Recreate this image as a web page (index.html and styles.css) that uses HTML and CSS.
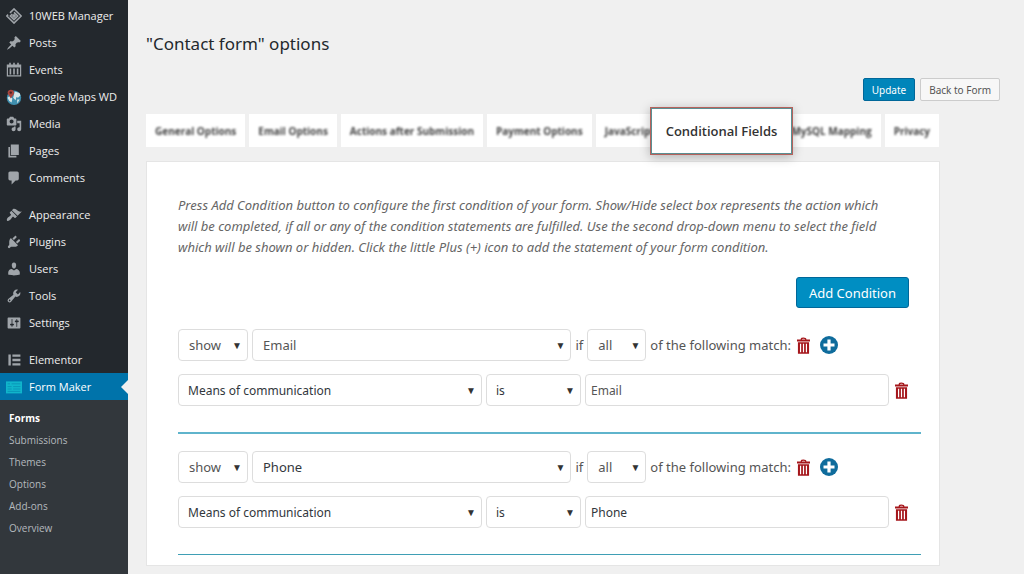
FILE: index.html
```html
<!DOCTYPE html>
<html lang="en">
<head>
<meta charset="utf-8">
<title>"Contact form" options</title>
<link rel="stylesheet" href="styles.css">
</head>
<body>
<svg class="sprite" aria-hidden="true">
  <symbol id="trash" viewBox="0 0 14 18"><path fill="none" stroke="currentColor" stroke-width="1.4" d="M4.6 3V2.4Q4.6 1 7 1T9.400 2.400V3"/><path fill="currentColor" fill-rule="evenodd" d="M0 2.600h14v2H0zM1 5.500h12V18H1zM3.200 7.200v9h1.300v-9zM6.350 7.200v9h1.300v-9zM9.500 7.200v9h1.300v-9z"/></symbol>
  <symbol id="plus" viewBox="0 0 18 18"><circle cx="9" cy="9" r="9" fill="currentColor"/><path fill="#fff" d="M7.400 3.500h3.200v3.900h3.900v3.200h-3.900v3.900H7.400v-3.900H3.500V7.400h3.900z"/></symbol>
</svg>
<div class="admin">
  <nav class="sidebar" aria-label="Admin menu">
    <ul class="menu">
      <li><a href="#"><svg viewBox="0 0 20 20" fill="none" stroke="currentColor" stroke-width="2"><path d="M5 6l5-4.800 9 8.800-9 8.800L1 10l1.700-1.700"/><path d="M10 5.500l4.600 4.500-4.600 4.500L5.400 10 8 7.500"/><path d="M10 8.500l1.500 1.500-1.500 1.500L8.500 10z"/></svg>10WEB Manager</a></li>
      <li><a href="#"><svg viewBox="0 0 20 20" fill="currentColor"><path d="M10.440 3.020l1.820-1.820 6.360 6.350-1.830 1.820c-1.050-.68-2.480-.57-3.410.36l-.75.75c-.92.93-1.040 2.350-.35 3.410l-1.830 1.820-2.410-2.410-2.800 2.790c-.42.42-3.380 2.710-3.800 2.290s1.860-3.390 2.280-3.810l2.790-2.790L4.100 9.360l1.830-1.820c1.050.69 2.480.57 3.400-.36l.75-.75c.93-.92 1.050-2.350.36-3.410z"/></svg>Posts</a></li>
      <li><a href="#"><svg viewBox="0 0 20 20" fill="currentColor"><path fill-rule="evenodd" d="M1 3h3V1h2v2h3V1h2v2h3V1h2v2h3v15H1zM2.500 7v9.500h15V7z"/><path d="M4.500 8h2v7.500h-2zM9 8h2v7.500H9zM13.500 8h2v7.500h-2z"/></svg>Events</a></li>
      <li><a href="#"><svg viewBox="0 0 20 20"><circle cx="10" cy="11" r="9" fill="#3f8fae"/><path fill="#d9e6e6" d="M11 3l6 2 1 3-3 3-2-1-1 4-3-3 1-4zM4 9l4 3-1 5-3-2-2-4zM14 13l3 0-3 5z"/><path fill="#a9453d" d="M6 1c3 0 4.500 2 4 4.500C9.500 8 7 9.500 6 12 4.500 9 2 7 2 4.500 2 2.500 4 1 6 1z"/><circle cx="6" cy="4.500" r="1.500" fill="#4d2424"/></svg>Google Maps WD</a></li>
      <li><a href="#"><svg viewBox="0 0 20 20" fill="currentColor"><path d="M13 11V4c0-.55-.45-1-1-1h-1.670L9 1H5L3.670 3H2c-.55 0-1 .45-1 1v7c0 .55.45 1 1 1h10c.55 0 1-.45 1-1zM7 4.500c1.380 0 2.500 1.120 2.500 2.500S8.380 9.500 7 9.500 4.500 8.380 4.500 7 5.620 4.500 7 4.500zM14 6h5v10.500c0 1.380-1.120 2.500-2.500 2.500S14 17.880 14 16.500s1.120-2.500 2.500-2.500c.17 0 .34.020.5.050V9h-3V6zm-4 8.050V13h2v3.500c0 1.380-1.120 2.500-2.500 2.500S7 17.880 7 16.500 8.120 14 9.500 14c.17 0 .34.020.5.050z"/></svg>Media</a></li>
      <li><a href="#"><svg viewBox="0 0 20 20" fill="currentColor"><path d="M6 15V2h10v13H6zm-1 1h8v2H3V5h2v11z"/></svg>Pages</a></li>
      <li><a href="#"><svg viewBox="0 0 20 20" fill="currentColor"><path d="M5 2h9c1.100 0 2 .9 2 2v7c0 1.100-.9 2-2 2h-2l-5 5v-5H5c-1.100 0-2-.9-2-2V4c0-1.100.9-2 2-2z"/></svg>Comments</a></li>
    </ul>
    <ul class="menu">
      <li><a href="#"><svg viewBox="0 0 20 20" fill="currentColor"><path d="M14.480 11.060L7.410 3.990l1.500-1.500c.5-.56 2.300-.47 3.510.32 1.210.8 1.430 1.280 2.910 2.100 1.180.64 2.450 1.260 4.450.85zm-.71.71L6.700 4.700 4.930 6.470c-.39.39-.39 1.020 0 1.410l1.060 1.060c.39.39.39 1.030 0 1.420-.6.6-1.430 1.110-2.210 1.690-.35.26-.7.53-1.010.84C1.430 14.230.4 16.080 1.400 17.070c.99 1 2.840-.03 4.180-1.360.31-.31.58-.66.85-1.020.57-.78 1.080-1.610 1.690-2.210.39-.39 1.020-.39 1.410 0l1.060 1.060c.39.39 1.020.39 1.410 0z"/></svg>Appearance</a></li>
      <li><a href="#"><svg viewBox="0 0 20 20" fill="currentColor"><path d="M13.110 4.360L9.870 7.600 8 5.730l3.240-3.240c.35-.34 1.050-.2 1.560.32.52.51.66 1.210.31 1.550zm-8 1.770l.91-1.120 9.010 9.010-1.190.84c-.71.71-2.630 1.160-3.820 1.160H6.140L4.900 17.260c-.59.59-1.540.59-2.120 0-.59-.58-.59-1.530 0-2.120l1.240-1.240v-3.880c0-1.130.4-3.190 1.090-3.890zm7.260 3.970l3.240-3.240c.34-.35 1.040-.21 1.550.31.52.51.66 1.210.31 1.550l-3.240 3.250z"/></svg>Plugins</a></li>
      <li><a href="#"><svg viewBox="0 0 20 20" fill="currentColor"><path d="M10 9.250c-2.270 0-2.730-3.440-2.730-3.440C7 4.020 7.820 2 9.970 2c2.160 0 2.980 2.020 2.710 3.810 0 0-.41 3.440-2.680 3.440zm0 2.570L12.720 10c2.390 0 4.520 2.330 4.520 4.530v2.490s-3.650 1.130-7.240 1.130c-3.650 0-7.240-1.130-7.240-1.130v-2.490c0-2.250 1.940-4.480 4.470-4.480z"/></svg>Users</a></li>
      <li><a href="#"><svg viewBox="0 0 20 20" fill="currentColor"><path d="M16.680 9.770c-1.340 1.340-3.300 1.670-4.950.99l-5.410 6.520c-.99.99-2.590.99-3.580 0s-.99-2.590 0-3.570l6.520-5.420c-.68-1.650-.35-3.610.99-4.950 1.280-1.280 3.120-1.620 4.720-1.060l-2.890 2.890 2.820 2.820 2.860-2.870c.53 1.580.18 3.390-1.080 4.650zM3.810 16.210c.4.39 1.040.39 1.430 0 .4-.4.4-1.040 0-1.430-.39-.4-1.030-.4-1.430 0-.39.39-.39 1.030 0 1.430z"/></svg>Tools</a></li>
      <li><a href="#"><svg viewBox="0 0 20 20" fill="currentColor"><path d="M18 16V4c0-.55-.45-1-1-1H3c-.55 0-1 .45-1 1v12c0 .55.45 1 1 1h14c.55 0 1-.45 1-1zM8 11h1c.55 0 1 .45 1 1s-.45 1-1 1H8v1.500c0 .28-.22.5-.5.5s-.5-.22-.5-.5V13H6c-.55 0-1-.45-1-1s.45-1 1-1h1V5.500c0-.28.22-.5.5-.5s.5.22.5.5V11zm5-2h-1c-.55 0-1-.45-1-1s.45-1 1-1h1V5.500c0-.28.22-.5.5-.5s.5.22.5.5V7h1c.55 0 1 .45 1 1s-.45 1-1 1h-1v5.500c0 .28-.22.5-.5.5s-.5-.22-.5-.5V9z"/></svg>Settings</a></li>
    </ul>
    <ul class="menu">
      <li><a href="#"><svg viewBox="0 0 20 20" fill="currentColor"><path d="M3 3h3v14H3zM8 3h10v3H8zM8 8.500h10v3H8zM8 14h10v3H8z"/></svg>Elementor</a></li>
      <li><a class="current" href="#" aria-current="true"><svg viewBox="0 0 20 20"><path fill="#10b5cb" d="M0 3h20v15H0z"/><path fill="none" stroke="#078fb4" d="M2 6h3M7 6h11M2 9.500h5M9 9.500h9M2 12.500h5M9 12.500h9M2 15.500h16"/></svg>Form Maker</a>
        <ul class="submenu">
          <li><a class="selected" href="#">Forms</a></li>
          <li><a href="#">Submissions</a></li>
          <li><a href="#">Themes</a></li>
          <li><a href="#">Options</a></li>
          <li><a href="#">Add-ons</a></li>
          <li><a href="#">Overview</a></li>
        </ul>
      </li>
    </ul>
  </nav>
  <main class="content">
    <h1>"Contact form" options</h1>
    <div class="actions">
      <button class="button primary" type="button">Update</button>
      <button class="button" type="button">Back to Form</button>
    </div>
    <div class="tabs" role="tablist">
      <button class="tab" type="button" role="tab"><span>General Options</span></button>
      <button class="tab" type="button" role="tab"><span>Email Options</span></button>
      <button class="tab" type="button" role="tab"><span>Actions after Submission</span></button>
      <button class="tab" type="button" role="tab"><span>Payment Options</span></button>
      <button class="tab" type="button" role="tab"><span>JavaScript</span></button>
      <button class="tab active" type="button" role="tab" aria-selected="true">Conditional Fields</button>
      <button class="tab" type="button" role="tab"><span>MySQL Mapping</span></button>
      <button class="tab" type="button" role="tab"><span>Privacy</span></button>
    </div>
    <section class="panel">
      <p class="intro">Press Add Condition button to configure the first condition of your form. Show/Hide select box represents the action which will be completed, if all or any of the condition statements are fulfilled. Use the second drop-down menu to select the field which will be shown or hidden. Click the little Plus (+) icon to add the statement of your form condition.</p>
      <div class="add"><button class="button primary large" type="button">Add Condition</button></div>
      <div class="condition">
        <div class="rule">
          <span class="select"><select aria-label="Action"><option>show</option><option>hide</option></select><i>▼</i></span>
          <span class="select wide"><select aria-label="Field"><option>Email</option><option>Phone</option></select><i>▼</i></span>
          <span>if</span>
          <span class="select"><select aria-label="Match"><option>all</option><option>any</option></select><i>▼</i></span>
          <span class="match">of the following match:</span>
          <button class="icon trash" type="button" aria-label="Delete condition"><svg><use href="#trash"/></svg></button>
          <button class="icon plus" type="button" aria-label="Add statement"><svg><use href="#plus"/></svg></button>
        </div>
        <div class="statement">
          <span class="select"><select aria-label="Statement field"><option>Means of communication</option></select><i>▼</i></span>
          <span class="select"><select aria-label="Operator"><option>is</option><option>is not</option></select><i>▼</i></span>
          <input type="text" value="Email" aria-label="Value">
          <button class="icon trash" type="button" aria-label="Delete statement"><svg><use href="#trash"/></svg></button>
        </div>
      </div>
      <div class="condition">
        <div class="rule">
          <span class="select"><select aria-label="Action"><option>show</option><option>hide</option></select><i>▼</i></span>
          <span class="select wide dark"><select aria-label="Field"><option>Phone</option><option>Email</option></select><i>▼</i></span>
          <span>if</span>
          <span class="select"><select aria-label="Match"><option>all</option><option>any</option></select><i>▼</i></span>
          <span class="match">of the following match:</span>
          <button class="icon trash" type="button" aria-label="Delete condition"><svg><use href="#trash"/></svg></button>
          <button class="icon plus" type="button" aria-label="Add statement"><svg><use href="#plus"/></svg></button>
        </div>
        <div class="statement">
          <span class="select"><select aria-label="Statement field"><option>Means of communication</option></select><i>▼</i></span>
          <span class="select"><select aria-label="Operator"><option>is</option><option>is not</option></select><i>▼</i></span>
          <input class="dark" type="text" value="Phone" aria-label="Value">
          <button class="icon trash" type="button" aria-label="Delete statement"><svg><use href="#trash"/></svg></button>
        </div>
      </div>
    </section>
  </main>
</div>
</body>
</html>
```
FILE: styles.css
```css
* { box-sizing: border-box; }
body {
  margin: 0;
  background: #f0f0f0;
  color: #555;
  font-family: "Open Sans", "Noto Sans", sans-serif;
  font-size: 13px;
}
ul { margin: 0; padding: 0; list-style: none; }
button, select, input { font: inherit; color: inherit; }
.sprite { display: none; }

.admin { display: flex; min-height: 100vh; }

.sidebar {
  flex: 0 0 128px;
  display: flex;
  flex-direction: column;
  gap: 10px;
  padding-top: 2px;
  background: #23282d;
}
.menu > li > a {
  display: flex;
  align-items: center;
  gap: 7px;
  height: 27px;
  padding-left: 6px;
  color: #eee;
  font-size: 11px;
  text-decoration: none;
  white-space: nowrap;
}
.menu svg { width: 16px; height: 16px; color: #a0a5aa; }
.menu:last-child { flex: 1; display: flex; flex-direction: column; }
.menu:last-child > li:last-child { flex: 1; display: flex; flex-direction: column; }
.menu > li > a.current { background: #0073aa; color: #fff; }
.current::after {
  content: "";
  margin-left: auto;
  border: 7px solid transparent;
  border-left: 0;
  border-right-color: #f0f0f0;
}
.submenu { flex: 1; padding: 7px 0 0 9px; background: #32373c; }
.submenu a {
  display: block;
  color: #b4b9be;
  font-size: 10px;
  line-height: 22px;
  text-decoration: none;
}
.submenu .selected { color: #fff; font-weight: 700; }

.content { flex: 1; min-width: 0; padding: 32px 24px 8px 18px; }
h1 {
  margin: 0;
  color: #23282d;
  font-family: "Noto Sans", sans-serif;
  font-size: 17px;
  font-weight: 400;
  line-height: 24px;
}
.actions { display: flex; justify-content: flex-end; gap: 5px; margin-top: 22px; }
.button {
  height: 23px;
  padding: 0 8px;
  border: 1px solid #ccc;
  border-radius: 2px;
  background: #f7f7f7;
  font-family: "Noto Sans", sans-serif;
  font-size: 10px;
  line-height: 20px;
  white-space: nowrap;
}
.primary { border-color: #006799; background: #0085ba; color: #fff; }
.large {
  height: 31px;
  padding: 0 12px;
  background: #008ec2;
  border-radius: 3px;
  font-size: 13px;
}

.tabs { display: flex; align-items: center; gap: 4px; height: 33px; margin-top: 13px; }
.tab {
  height: 33px;
  padding: 0 9px;
  border: 0;
  background: #fff;
  color: #444;
  font-size: 10px;
  font-weight: 700;
  white-space: nowrap;
}
.tab span { display: block; filter: blur(1px); }
.active {
  z-index: 1;
  height: 48px;
  margin: 0 -15px 0 -18px;
  padding: 0 15px;
  border: 1px solid #b5625c;
  box-shadow: inset 0 0 0 1px #5a8f93, 0 2px 10px #0004;
  color: #333;
  font-size: 13px;
  font-weight: 600;
}

.panel {
  margin: 14px 60px 0 0;
  padding: 33px 18px 10px 31px;
  border: 1px solid #e5e5e5;
  background: #fff;
  font-family: "Noto Sans", sans-serif;
}
.intro { margin: 0 24px 0 0; color: #666; font-style: italic; line-height: 21px; }
.add { display: flex; justify-content: flex-end; margin: 19px 12px 21px 0; }

.condition { padding-bottom: 26px; border-bottom: 2px solid #5fb4cc; }
.condition + .condition { margin-top: 17px; border-bottom: 1px solid #3f9fb5; }
.rule, .statement { display: flex; align-items: center; gap: 4px; }
.rule { padding-right: 83px; }
.statement {
  display: grid;
  grid-template-columns: 16fr 5fr 16fr auto;
  margin-top: 13px;
  padding-right: 13px;
  font-size: 12px;
}
.select { display: grid; align-items: center; }
.select select, .select i { grid-area: 1 / 1; }
.select i {
  justify-self: end;
  margin-right: 6px;
  color: #333;
  font-size: 10px;
  font-style: normal;
  pointer-events: none;
}
select, input {
  width: 100%;
  min-width: 0;
  height: 32px;
  border: 1px solid #ddd;
  border-radius: 4px;
  background: #fff;
}
select { appearance: none; padding: 0 25px 0 9px; }
.rule select { padding-left: 10px; }
input { padding: 0 5px; }
.wide { flex: 1; }
.dark, .statement .select { color: #32373c; }
.match { white-space: nowrap; }
.icon { display: flex; padding: 0; border: 0; background: none; }
.trash { margin-left: 2px; color: #a5161b; }
.trash svg { width: 13px; height: 17px; }
.plus { margin-left: 6px; color: #0f6c9c; }
.plus svg { width: 18px; height: 18px; }
```
